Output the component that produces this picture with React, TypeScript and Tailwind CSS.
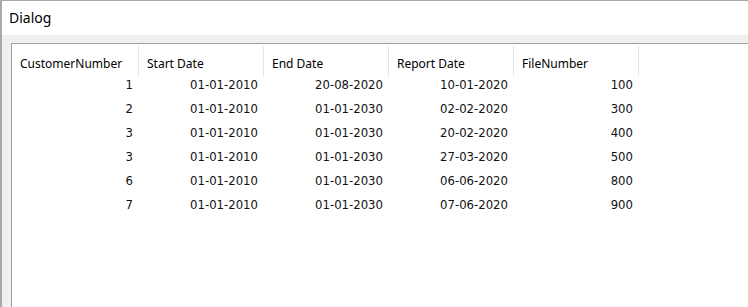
const columns = ["CustomerNumber", "Start Date", "End Date", "Report Date", "FileNumber"];

const rows = [
  ["1", "01-01-2010", "20-08-2020", "10-01-2020", "100"],
  ["2", "01-01-2010", "01-01-2030", "02-02-2020", "300"],
  ["3", "01-01-2010", "01-01-2030", "20-02-2020", "400"],
  ["3", "01-01-2010", "01-01-2030", "27-03-2020", "500"],
  ["6", "01-01-2010", "01-01-2030", "06-06-2020", "800"],
  ["7", "01-01-2010", "01-01-2030", "07-06-2020", "900"],
];

const widths = ["w-[127px]", "w-[125px]", "w-[125px]", "w-[125px]", "w-[125px]"];

export default function App() {
  return (
    <div className="flex h-[307px] w-[748px] flex-col overflow-hidden border-l-2 border-t border-[#a9a9a9] bg-white font-['Noto_Sans',sans-serif] text-black">
      <div className="flex h-[34px] items-center pl-[7px] pb-[1px] text-[14px]">Dialog</div>
      <div className="flex flex-1 flex-col bg-[#f0f0f0] pl-[9px] pt-[8px]">
        <div className="flex-1 border-l border-t border-[#a0a0a0] bg-white text-[12px]">
          <div className="flex h-[32px]">
            {columns.map((c, i) => (
              <div
                key={c}
                className={`${widths[i]} mt-[2px] flex h-[30px] items-center border-r border-[#e5e5e5] pl-[8px] pt-[5px]`}
              >
                {c}
              </div>
            ))}
          </div>
          {rows.map((r, ri) => (
            <div
              key={ri}
              className="flex h-[24px] items-center font-['DejaVu_Sans',sans-serif] text-[11.7px] text-[#111]"
            >
              {r.map((v, i) => (
                <div key={i} className={`${widths[i]} pr-[6px] pb-[4px] text-right`}>
                  {v}
                </div>
              ))}
            </div>
          ))}
        </div>
      </div>
    </div>
  );
}
